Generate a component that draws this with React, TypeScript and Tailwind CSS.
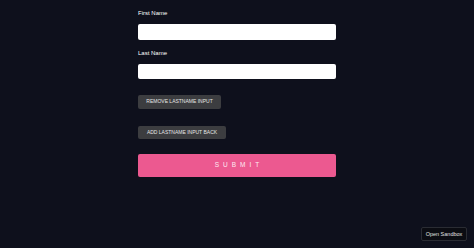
import React from 'react';
import { useState } from 'react';

const App: React.FC = () => {
  const [showLastName, setShowLastName] = useState(true);

  return (
    <div className="relative min-h-screen bg-[#0e101c] font-['Liberation_Sans',Arial,sans-serif]">
      <form
        className="mx-auto flex w-[198px] flex-col pt-[9px]"
        onSubmit={(e) => e.preventDefault()}
      >
        <label className="block h-[8px] text-[6px] leading-[8px] text-white">First Name</label>
        <input className="mt-[7px] h-[15.5px] w-full rounded-[2px] bg-white px-[4px] text-[6px]" />

        {showLastName && (
          <>
            <label className="mt-[9px] block h-[8px] text-[6px] leading-[8px] text-white">Last Name</label>
            <input className="mt-[7px] h-[15.5px] w-full rounded-[2px] bg-white px-[4px] text-[6px]" />
          </>
        )}

        <button
          type="button"
          className="mt-[16px] h-[13.5px] w-[83px] rounded-[2px] bg-[#3c3d40] text-[5px] uppercase text-[#e6e6e6]"
          onClick={() => setShowLastName(false)}
        >
          Remove lastname input
        </button>
        <button
          type="button"
          className="mt-[17px] h-[13.5px] w-[88px] rounded-[2px] bg-[#3c3d40] text-[5px] uppercase text-[#e6e6e6]"
          onClick={() => setShowLastName(true)}
        >
          Add lastname input back
        </button>

        <button
          type="submit"
          className="mt-[14.5px] h-[23.5px] w-full rounded-[2px] bg-[#ec5990] pl-[4px] text-[6.5px] uppercase tracking-[4px] text-[#fde9f0]"
        >
          Submit
        </button>
      </form>

      {/* sandbox link */}
      <button className="absolute bottom-[7px] right-[7px] h-[14px] w-[46px] rounded-[2px] border border-[#2a2c33] bg-[#0b0c12] text-[5.5px] text-[#e0e0e0]">
        Open Sandbox
      </button>
    </div>
  );
};

export default App;
